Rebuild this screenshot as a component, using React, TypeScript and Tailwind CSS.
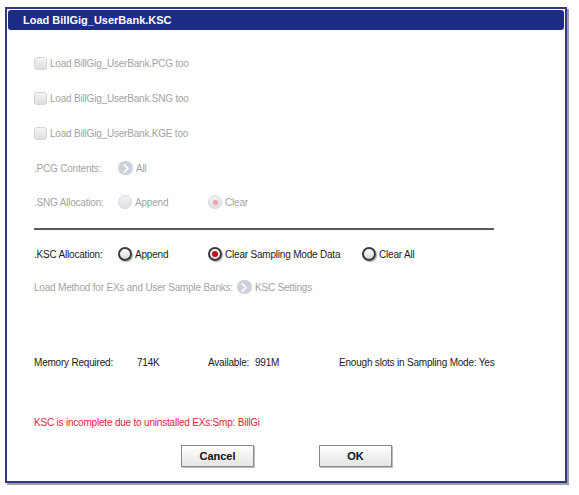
import React from "react";

const font = { fontFamily: '"Liberation Sans", Arial, sans-serif' };

function Checkbox() {
  return (
    <div className="w-[13px] h-[13px] rounded-[3px] border border-[#d4d4d4] bg-gradient-to-b from-[#f4f4f4] to-[#dedede] shrink-0" />
  );
}

function Radio({ disabled, selected }: { disabled?: boolean; selected?: boolean }) {
  if (disabled) {
    return (
      <div className="w-[14px] h-[14px] rounded-full border border-[#d6d8dc] bg-gradient-to-b from-[#f2f3f5] to-[#dcdfe4] flex items-center justify-center shrink-0">
        {selected && <div className="w-[5px] h-[5px] rounded-full bg-[#f0a0a8]" />}
      </div>
    );
  }
  return (
    <div className="w-[14px] h-[14px] rounded-full border-2 border-[#3a3a3a] bg-gradient-to-b from-[#ffffff] to-[#d8d8d8] flex items-center justify-center shrink-0 shadow-[1px_1px_1px_rgba(0,0,0,0.35)]">
      {selected && <div className="w-[6px] h-[6px] rounded-full bg-[#c0101c]" />}
    </div>
  );
}

function Chevron() {
  return (
    <div className="w-[15px] h-[14px] rounded-full bg-[#cdd2da] flex items-center justify-center shrink-0">
      <svg width="8" height="9" viewBox="0 0 8 9">
        <path d="M2.5 1 L5.8 4.5 L2.5 8" fill="none" stroke="#ffffff" strokeWidth="1.8" strokeLinecap="round" strokeLinejoin="round" />
      </svg>
    </div>
  );
}

function Btn({ label }: { label: string }) {
  return (
    <div className="w-[73px] h-[22px] border border-[#8a8a8a] bg-gradient-to-b from-[#ffffff] to-[#e4e4e4] flex items-center justify-center text-[11px] font-bold text-[#111] shadow-[1px_1px_0_#bdbdbd]">
      {label}
    </div>
  );
}

export default function App() {
  return (
    <div className="w-[579px] h-[495px] bg-white pl-[5px] pt-[7px]" style={font}>
      <div className="w-[562px] h-[476px] border-2 border-[#34397a] bg-white p-[1px] flex flex-col shadow-[2px_2px_0_#9a9cb0]">
        <div className="h-[20px] rounded-[3px] bg-[#1c2b86] flex items-center pl-[15px] text-white text-[11px] font-bold">
          Load BillGig_UserBank.KSC
        </div>

        <div className="flex flex-col pl-[26px] text-[10px] tracking-[-0.2px] text-[#a3a3a3]">
          <div className="mt-[26px] h-[14px] flex items-center gap-[3px]">
            <Checkbox />
            <span>Load BillGig_UserBank.PCG too</span>
          </div>
          <div className="mt-[21px] h-[14px] flex items-center gap-[3px]">
            <Checkbox />
            <span>Load BillGig_UserBank.SNG too</span>
          </div>
          <div className="mt-[21px] h-[14px] flex items-center gap-[3px]">
            <Checkbox />
            <span>Load BillGig_UserBank.KGE too</span>
          </div>

          <div className="mt-[21px] h-[14px] flex items-center">
            <span className="w-[84px]">.PCG Contents:</span>
            <div className="flex items-center gap-[3px]">
              <Chevron />
              <span>All</span>
            </div>
          </div>

          <div className="mt-[20px] h-[14px] flex items-center">
            <span className="w-[84px]">.SNG Allocation:</span>
            <div className="w-[90px] flex items-center gap-[3px]">
              <Radio disabled />
              <span>Append</span>
            </div>
            <div className="flex items-center gap-[3px]">
              <Radio disabled selected />
              <span>Clear</span>
            </div>
          </div>

          <div className="mt-[19px] h-[2px] w-[460px] bg-[#5a5a5a]" />

          <div className="mt-[17px] h-[14px] flex items-center text-[#1a1a1a]">
            <span className="w-[84px]">.KSC Allocation:</span>
            <div className="w-[90px] flex items-center gap-[3px]">
              <Radio />
              <span>Append</span>
            </div>
            <div className="w-[154px] flex items-center gap-[3px]">
              <Radio selected />
              <span>Clear Sampling Mode Data</span>
            </div>
            <div className="flex items-center gap-[3px]">
              <Radio />
              <span>Clear All</span>
            </div>
          </div>

          <div className="mt-[19px] h-[14px] flex items-center gap-[4px]">
            <span>Load Method for EXs and User Sample Banks:</span>
            <div className="flex items-center gap-[3px]">
              <Chevron />
              <span>KSC Settings</span>
            </div>
          </div>

          <div className="mt-[61px] h-[14px] flex items-center text-[#1a1a1a]">
            <span className="w-[103px]">Memory Required:</span>
            <span className="w-[71px]">714K</span>
            <span className="w-[47px]">Available:</span>
            <span className="w-[84px]">991M</span>
            <span>Enough slots in Sampling Mode: Yes</span>
          </div>

          <div className="mt-[46px] h-[14px] flex items-center text-[#e02838]">
            KSC is incomplete due to uninstalled EXs:Smp: BillGi
          </div>
        </div>

        <div className="mt-[16px] flex pl-[173px] gap-[65px]">
          <Btn label="Cancel" />
          <Btn label="OK" />
        </div>
      </div>
    </div>
  );
}
